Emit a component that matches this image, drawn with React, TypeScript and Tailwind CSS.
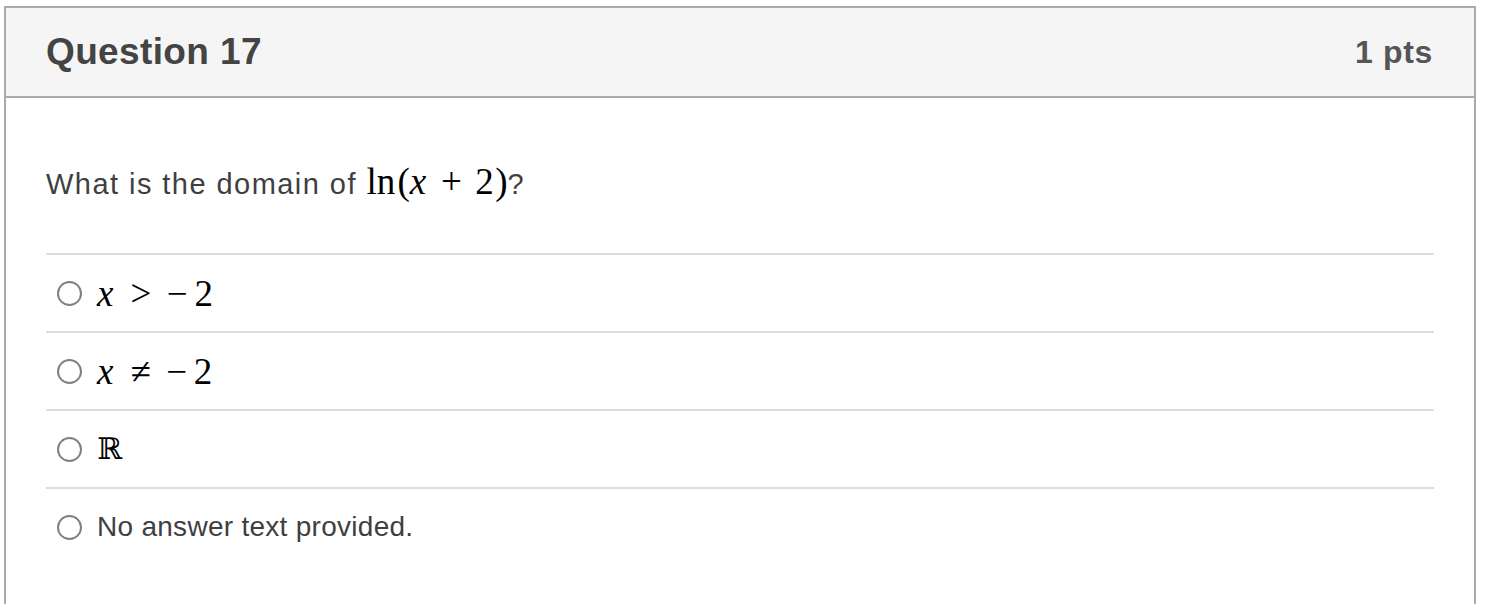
const sans = { fontFamily: '"Liberation Sans", Arial, sans-serif' };

function M({ children }: { children: React.ReactNode }) {
  return (
    <span className="font-['Liberation_Serif','DejaVu_Serif',serif] text-[37px] tracking-normal text-black">
      {children}
    </span>
  );
}

function V({ children }: { children: React.ReactNode }) {
  return <i className="mr-[0.04em] italic">{children}</i>;
}

function Rel({ children }: { children: React.ReactNode }) {
  return <span className="mx-[0.42em]">{children}</span>;
}

function Radio() {
  return (
    <span className="box-border inline-block h-[25px] w-[25px] shrink-0 rounded-full border-2 border-[#808080] bg-white" />
  );
}

function Answer({ children }: { children: React.ReactNode }) {
  return (
    <div className="flex h-[78px] items-center gap-[15px] border-t-2 border-[#dddddd] pl-[11px]">
      <Radio />
      <div className="leading-none">{children}</div>
    </div>
  );
}

export default function App() {
  return (
    <div className="h-[604px] w-full overflow-hidden bg-white" style={sans}>
      <div className="ml-[4px] mt-[6px] h-[640px] w-[1472px] border-2 border-[#aaaaaa]">
        <div className="flex h-[90px] items-center justify-between border-b-2 border-[#aaaaaa] bg-[#f5f5f5] pl-[40px] pr-[41px]">
          <h2 className="text-[37px] font-bold tracking-[0.01em] text-[#444444]">Question 17</h2>
          <span className="text-[32px] font-bold tracking-[0.02em] text-[#555555]">1 pts</span>
        </div>
        <div className="px-[40px]">
          <p className="mb-[51px] mt-[64px] h-[40px] text-[29px] leading-[40px] tracking-[0.05em] text-[#3f3f3f]">
            What is the domain of{" "}
            <M>
              ln<span className="ml-[0.06em]">(</span>
              <V>x</V>
              <span className="mx-[0.36em]">+</span>2<span className="ml-[0.04em]">)</span>
            </M>
            ?
          </p>
          <Answer>
            <M>
              <V>x</V>
              <Rel>&gt;</Rel>−<span className="ml-[0.18em]">2</span>
            </M>
          </Answer>
          <Answer>
            <M>
              <V>x</V>
              <Rel>≠</Rel>−<span className="ml-[0.18em]">2</span>
            </M>
          </Answer>
          <Answer>
            <span className="font-['DejaVu_Serif',serif] text-[30px] text-black">ℝ</span>
          </Answer>
          <Answer>
            <span className="text-[28px] tracking-[0.01em] text-[#3f3f3f]">No answer text provided.</span>
          </Answer>
        </div>
      </div>
    </div>
  );
}
